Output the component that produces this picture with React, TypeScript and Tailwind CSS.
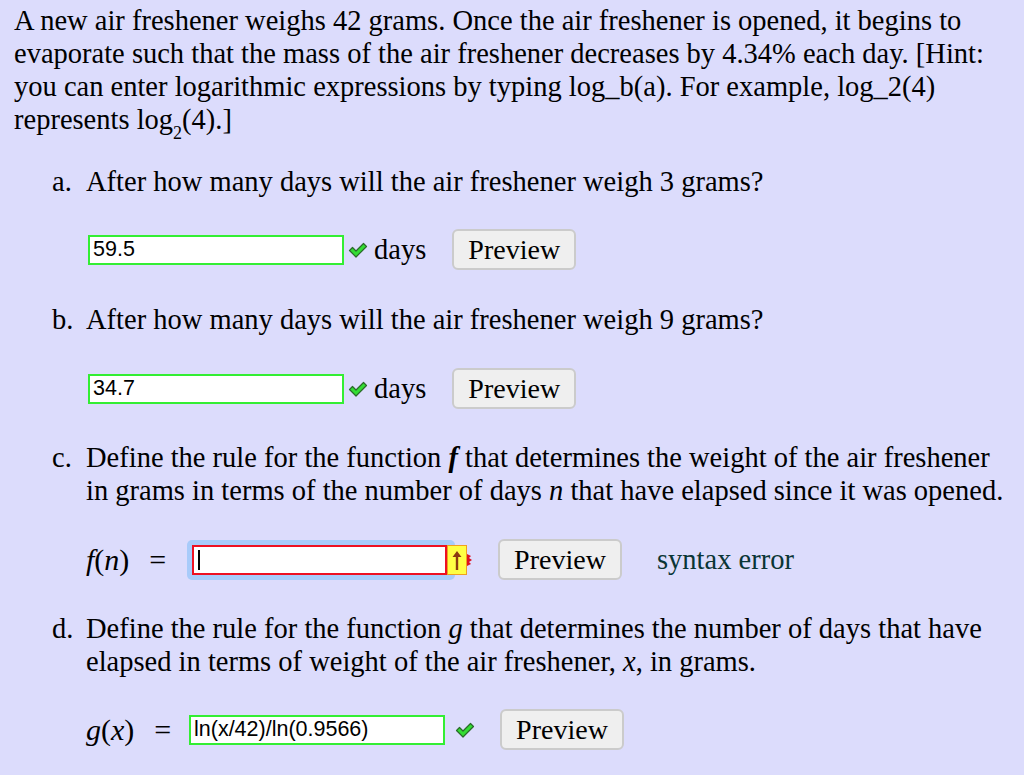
import React from "react";

const serif = { fontFamily: '"Liberation Serif", "Times New Roman", serif' };
const sans = { fontFamily: '"Liberation Sans", Arial, sans-serif' };

function Check() {
    return (
        <svg width="20" height="16" viewBox="0 0 20 16" className="shrink-0">
            <path d="M1.5 8.5 L4.5 5.5 L8 9 L15.5 1.5 L18.5 4.5 L8 15 Z" fill="#33dd33" stroke="#2a6a2a" strokeWidth="1.2" strokeLinejoin="round" />
        </svg>
    );
}

function PreviewButton() {
    return (
        <button className="h-[41px] w-[124px] rounded-[6px] border-2 border-[#cbcbcb] bg-[#efefef] text-[28px] leading-[36px] text-black shrink-0" style={serif}>
            Preview
        </button>
    );
}

function Part({ letter, children }: { letter: string; children: React.ReactNode }) {
    return (
        <div className="flex ml-[38px]">
            <div className="w-[34px] shrink-0">{letter}</div>
            <div className="whitespace-nowrap">{children}</div>
        </div>
    );
}

function AnswerInput({ value }: { value: string }) {
    return (
        <div className="h-[30px] w-[256px] border-2 border-[#33ee33] bg-white flex items-center pl-[3px] text-[21.5px] text-black" style={sans}>
            {value}
        </div>
    );
}

export default function App() {
    return (
        <div className="min-h-screen bg-[#dcdcfc] text-black pl-[14px] pt-[4px] text-[28.5px] leading-[33px]" style={serif}>
            <p className="whitespace-nowrap">
                A new air freshener weighs 42 grams. Once the air freshener is opened, it begins to
                <br />
                evaporate such that the mass of the air freshener decreases by 4.34% each day. [Hint:
                <br />
                you can enter logarithmic expressions by typing log_b(a). For example, log_2(4)
                <br />
                represents log<sub className="text-[18px] align-[-5px]">2</sub>(4).]
            </p>

            <div className="mt-[29px]">
                <Part letter="a.">After how many days will the air freshener weigh 3 grams?</Part>
            </div>
            <div className="mt-[31px] ml-[74px] flex items-center h-[41px]">
                <AnswerInput value="59.5" />
                <div className="ml-[4px]"><Check /></div>
                <span className="ml-[6px]">days</span>
                <div className="ml-[26px]"><PreviewButton /></div>
            </div>

            <div className="mt-[33px]">
                <Part letter="b.">After how many days will the air freshener weigh 9 grams?</Part>
            </div>
            <div className="mt-[32px] ml-[74px] flex items-center h-[41px]">
                <AnswerInput value="34.7" />
                <div className="ml-[4px]"><Check /></div>
                <span className="ml-[6px]">days</span>
                <div className="ml-[26px]"><PreviewButton /></div>
            </div>

            <div className="mt-[32px]">
                <Part letter="c.">
                    Define the rule for the function <i className="font-semibold">f</i> that determines the weight of the air freshener
                    <br />
                    in grams in terms of the number of days <i>n</i> that have elapsed since it was opened.
                </Part>
            </div>
            <div className="mt-[32px] ml-[72px] flex items-center h-[41px]">
                <span className="w-[101px] shrink-0 whitespace-nowrap text-[30px]"><i>f</i>(<i>n</i>)<span className="ml-[20px]">=</span></span>
                <div className="flex items-center rounded-[5px] bg-[#a8cbfa] py-[5px] pl-[5px] pr-[8px]">
                    <div className="h-[30px] w-[255px] border-2 border-[#ee1122] bg-white flex items-center pl-[4px]">
                        <div className="w-[2px] h-[20px] bg-black" />
                    </div>
                </div>
                <div className="h-[30px] w-[20px] bg-[#ffff44] border border-[#f0a020] flex items-center justify-center -ml-[8px] relative">
                    <svg width="12" height="22" viewBox="0 0 12 22">
                        <path d="M6 2 L1.5 8 L4.8 8 L4.8 21 L7.2 21 L7.2 8 L10.5 8 Z" fill="#8b3a10" />
                    </svg>
                </div>
                <svg width="6" height="12" viewBox="0 0 6 12" className="shrink-0">
                    <path d="M0 0 L4 2 L2 4 L5 6 L2 8 L4 10 L0 12 Z" fill="#dd1122" />
                </svg>
                <div className="ml-[25px]"><PreviewButton /></div>
                <span className="ml-[35px] text-[#0a3535] whitespace-nowrap">syntax error</span>
            </div>

            <div className="mt-[32px]">
                <Part letter="d.">
                    Define the rule for the function <i>g</i> that determines the number of days that have
                    <br />
                    elapsed in terms of weight of the air freshener, <i>x</i>, in grams.
                </Part>
            </div>
            <div className="mt-[31px] ml-[72px] flex items-center h-[41px]">
                <span className="w-[103px] shrink-0 whitespace-nowrap text-[30px]"><i>g</i>(<i>x</i>)<span className="ml-[20px]">=</span></span>
                <AnswerInput value="ln(x/42)/ln(0.9566)" />
                <div className="ml-[10px]"><Check /></div>
                <div className="ml-[25px]"><PreviewButton /></div>
            </div>
        </div>
    );
}
